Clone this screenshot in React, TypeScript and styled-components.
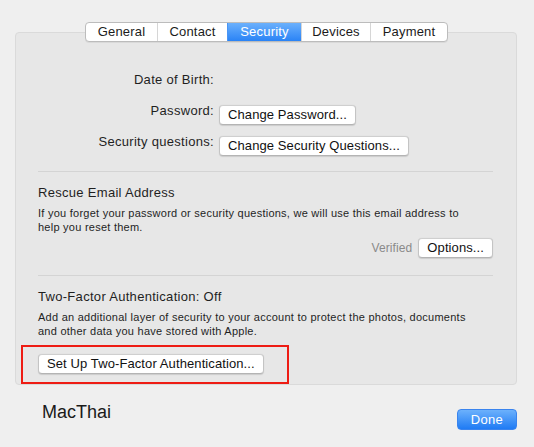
import React from "react";
import styled, { createGlobalStyle, css } from "styled-components";

const Global = createGlobalStyle`
  html, body { margin: 0; padding: 0; }
  body {
    background: #efefef;
    font-family: "Liberation Sans", Arial, sans-serif;
    color: #1f1f1f;
    -webkit-font-smoothing: antialiased;
  }
`;

const Window = styled.div`
  width: 534px;
  height: 447px;
  box-sizing: border-box;
  padding: 22px 17px 0 15px;
  display: flex;
  flex-direction: column;
`;

const TabBar = styled.div`
  display: flex;
  align-self: center;
  position: relative;
  z-index: 1;
  margin-bottom: -10px;
  margin-left: 1px;
  height: 20px;
  box-sizing: border-box;
  border: 1px solid #bcbcbc;
  border-radius: 4px;
  background: #fff;
  box-shadow: 0 1px 0 rgba(0, 0, 0, 0.06);
  overflow: hidden;
`;

const Tab = styled.div<{ $w: number; $active?: boolean }>`
  width: ${(p) => p.$w}px;
  box-sizing: border-box;
  text-align: center;
  font-size: 13px;
  line-height: 18px;
  letter-spacing: 0.2px;
  color: #1b1b1b;
  border-left: 1px solid #d6d6d6;
  &:first-child { border-left: none; }
  ${(p) =>
    p.$active &&
    css`
      color: #fff;
      border-left-color: #4a95f5;
      background: linear-gradient(#6bb0fc, #2a83f6);
    `}
`;

const Panel = styled.div`
  background: #e7e7e7;
  border: 1px solid #dadada;
  border-radius: 4px;
  height: 353px;
  box-sizing: border-box;
  padding: 41px 23px 0 22px;
  display: flex;
  flex-direction: column;
`;

const Form = styled.div`
  display: grid;
  grid-template-columns: 176px auto;
  grid-auto-rows: 20px;
  column-gap: 5px;
  row-gap: 11px;
  justify-items: start;
`;

const Label = styled.div`
  justify-self: end;
  font-size: 13px;
  line-height: 16px;
  letter-spacing: 0.3px;
  margin-top: -2px;
  color: #1f1f1f;
  white-space: nowrap;
`;

const Button = styled.button`
  height: 20px;
  box-sizing: border-box;
  padding: 0 8px;
  border: 1px solid #c4c4c4;
  border-top-color: #cfcfcf;
  border-bottom-color: #b4b4b4;
  border-radius: 4px;
  background: #fff;
  box-shadow: 0 0.5px 1px rgba(0, 0, 0, 0.12);
  font-family: inherit;
  font-size: 13px;
  line-height: 18px;
  letter-spacing: 0.1px;
  color: #111;
  white-space: nowrap;
`;

const Divider = styled.div<{ $top: number }>`
  height: 1px;
  background: #d4d4d4;
  margin-top: ${(p) => p.$top}px;
`;

const Heading = styled.div`
  font-size: 13px;
  line-height: 16px;
  letter-spacing: 0.3px;
  margin-top: 13px;
  color: #1f1f1f;
`;

const Para = styled.p`
  margin: 5px 0 0;
  font-size: 11px;
  line-height: 14px;
  letter-spacing: 0.25px;
  color: #1f1f1f;
`;

const ActionRow = styled.div`
  display: flex;
  justify-content: flex-end;
  align-items: center;
  gap: 6px;
  margin-top: 4px;
`;

const Muted = styled.span`
  font-size: 12px;
  color: #8a8a8a;
  letter-spacing: 0.1px;
`;

const Highlight = styled.div`
  margin: 7px 0 0 -17px;
  width: 268px;
  height: 39px;
  box-sizing: border-box;
  border: 2px solid #ee1c14;
  padding: 7px 0 0 15px;
`;

const Footer = styled.div`
  display: flex;
  justify-content: space-between;
  align-items: flex-start;
  padding: 17px 0 0 27px;
`;

const Account = styled.div`
  font-size: 18px;
  line-height: 21px;
  color: #1a1a1a;
`;

const PrimaryButton = styled.button`
  width: 60px;
  height: 21px;
  margin-top: 7px;
  box-sizing: border-box;
  border: 1px solid #3a84ee;
  border-radius: 4px;
  background: linear-gradient(#6cb1fc, #1f7bf4);
  color: #fff;
  font-family: inherit;
  font-size: 13px;
  line-height: 18px;
  letter-spacing: 0.3px;
  padding: 0;
`;

const tabs = [
  { name: "General", w: 71 },
  { name: "Contact", w: 70 },
  { name: "Security", w: 74, active: true },
  { name: "Devices", w: 69 },
  { name: "Payment", w: 77 },
];

export default function App() {
  return (
    <>
      <Global />
      <Window>
        <TabBar>
          {tabs.map((t) => (
            <Tab key={t.name} $w={t.w} $active={t.active}>
              {t.name}
            </Tab>
          ))}
        </TabBar>
        <Panel>
          <Form>
            <Label>Date of Birth:</Label>
            <span />
            <Label>Password:</Label>
            <Button>Change Password...</Button>
            <Label>Security questions:</Label>
            <Button>Change Security Questions...</Button>
          </Form>
          <Divider $top={15} />
          <Heading>Rescue Email Address</Heading>
          <Para>
            If you forget your password or security questions, we will use this email address to
            <br />
            help you reset them.
          </Para>
          <ActionRow>
            <Muted>Verified</Muted>
            <Button>Options...</Button>
          </ActionRow>
          <Divider $top={17} />
          <Heading>Two-Factor Authentication: Off</Heading>
          <Para>
            Add an additional layer of security to your account to protect the photos, documents
            <br />
            and other data you have stored with Apple.
          </Para>
          <Highlight>
            <Button>Set Up Two-Factor Authentication...</Button>
          </Highlight>
        </Panel>
        <Footer>
          <Account>MacThai</Account>
          <PrimaryButton>Done</PrimaryButton>
        </Footer>
      </Window>
    </>
  );
}
